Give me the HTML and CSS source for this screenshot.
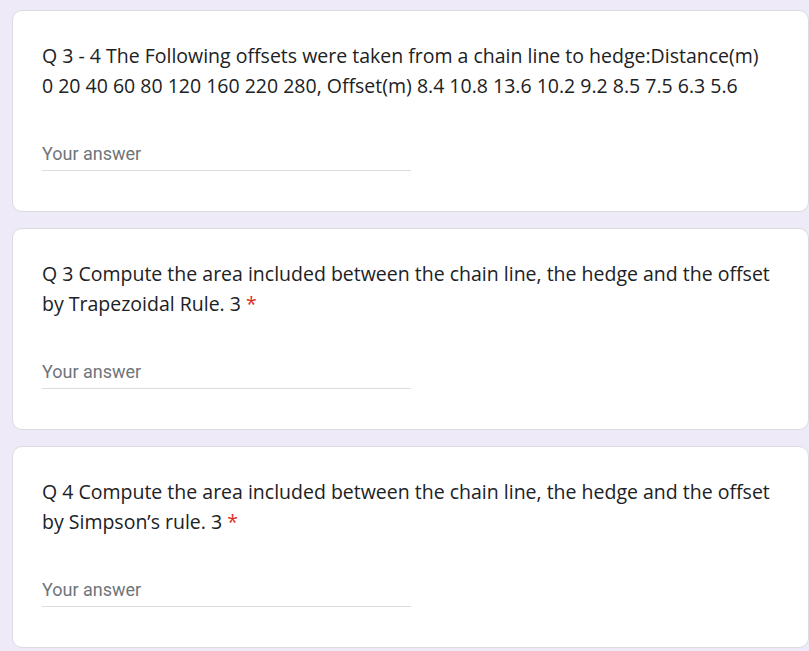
FILE: index.html
```html
<!DOCTYPE html>
<html>
<head>
<meta charset="utf-8">
<link rel="stylesheet" href="styles.css">
</head>
<body>
<div class="list">
  <div class="card">
    <div class="title">Q 3 - 4 The Following offsets were taken from a chain line to hedge:Distance(m)<br>0 20 40 60 80 120 160 220 280, Offset(m) 8.4 10.8 13.6 10.2 9.2 8.5 7.5 6.3 5.6</div>
    <div class="field">Your answer</div>
  </div>
  <div class="card">
    <div class="title">Q 3 Compute the area included between the chain line, the hedge and the offset<br>by Trapezoidal Rule. 3 <span class="req">*</span></div>
    <div class="field">Your answer</div>
  </div>
  <div class="card">
    <div class="title">Q 4 Compute the area included between the chain line, the hedge and the offset<br>by Simpson’s rule. 3 <span class="req">*</span></div>
    <div class="field">Your answer</div>
  </div>
</div>
</body>
</html>
```

FILE: styles.css
```css
html, body {
  margin: 0;
  padding: 0;
  background: #eeeaf8;
}
.list {
  display: flex;
  flex-direction: column;
  gap: 16px;
  padding: 10px 0 0 12px;
}
.card {
  width: 797px;
  box-sizing: border-box;
  background: #ffffff;
  border: 1px solid #dadce0;
  border-radius: 10px;
  padding: 30px 30px 40px 29px;
}
.title {
  font-family: "Open Sans", "Noto Sans", sans-serif;
  font-size: 19.5px;
  line-height: 30px;
  color: #202124;
  letter-spacing: 0;
  white-space: nowrap;
}
.req {
  color: #d93025;
}
.field {
  margin-top: 42px;
  width: 369px;
  font-family: Roboto, "Liberation Sans", sans-serif;
  font-size: 18px;
  line-height: 22px;
  padding-bottom: 5px;
  color: #70757a;
  border-bottom: 1px solid #dadce0;
}
```
